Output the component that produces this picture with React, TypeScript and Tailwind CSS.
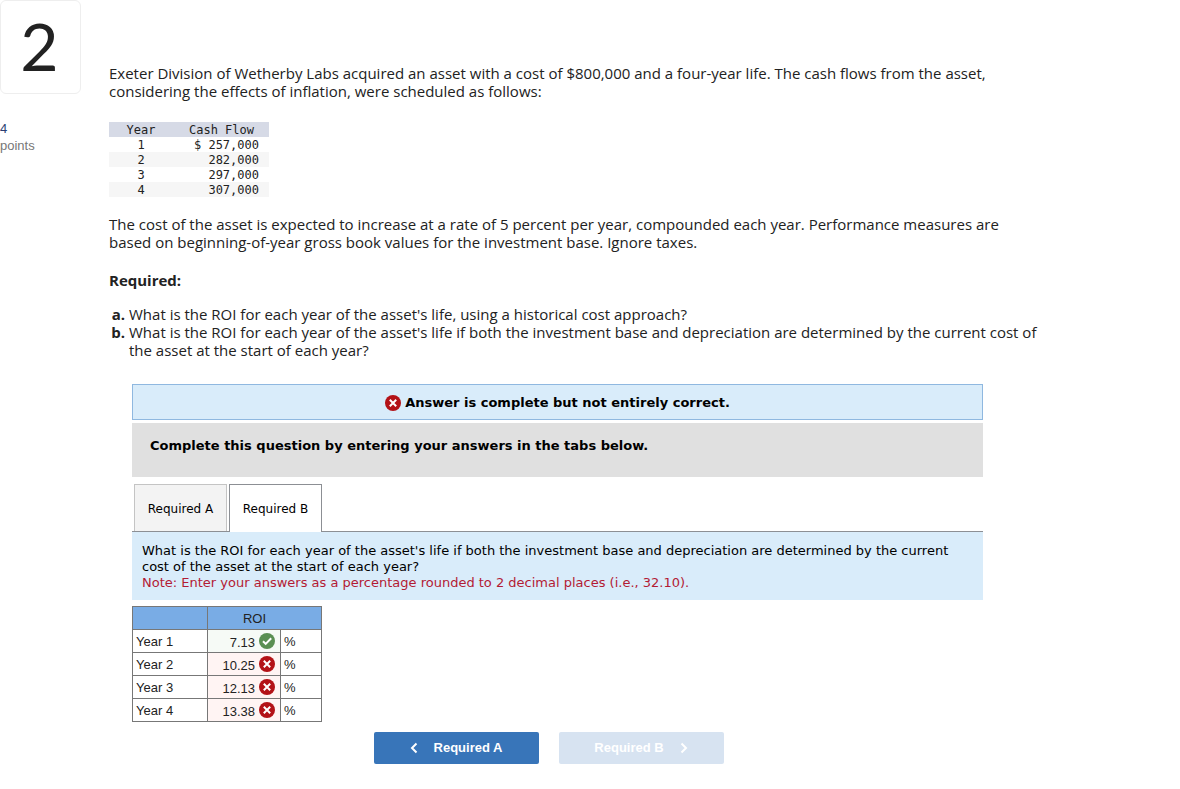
import { useState } from "react";

const CASH_FLOWS = [
  { year: 1, amount: "$ 257,000" },
  { year: 2, amount: "282,000" },
  { year: 3, amount: "297,000" },
  { year: 4, amount: "307,000" },
];

const ANSWERS = [
  { label: "Year 1", value: "7.13", correct: true },
  { label: "Year 2", value: "10.25", correct: false },
  { label: "Year 3", value: "12.13", correct: false },
  { label: "Year 4", value: "13.38", correct: false },
];

function WrongIcon() {
  return (
    <svg className="size-4 shrink-0" viewBox="0 0 16 16" role="img" aria-label="Incorrect">
      <circle cx="8" cy="8" r="8" fill="#b31217" />
      <path d="M4.8 4.8l6.4 6.4M11.2 4.8l-6.4 6.4" stroke="#fff" strokeWidth="2" />
    </svg>
  );
}

function RightIcon() {
  return (
    <svg className="size-4 shrink-0" viewBox="0 0 16 16" role="img" aria-label="Correct">
      <circle cx="8" cy="8" r="8" fill="#5a8f53" />
      <path d="M4 8.2l2.7 2.7L12.2 5.2" fill="none" stroke="#fff" strokeWidth="2" />
    </svg>
  );
}

function Chevron({ direction }: { direction: "left" | "right" }) {
  return (
    <svg className="h-3 w-2" viewBox="0 0 8 12" fill="none" stroke="currentColor" strokeWidth="2" aria-hidden="true">
      <path d={direction === "left" ? "M6.5 1.5L2 6l4.5 4.5" : "M1.5 1.5L6 6l-4.5 4.5"} />
    </svg>
  );
}

function CashFlowTable() {
  return (
    <table className="mt-[22px] w-40 font-['DejaVu_Sans_Mono',monospace] text-xs leading-[14px]">
      <thead>
        <tr className="bg-[#d6dae6]">
          <th className="w-16 px-0 pt-px pb-0 font-normal">Year</th>
          <th className="px-0 pt-px pb-0 font-normal">
            <span className="pl-px">Cash Flow</span>
          </th>
        </tr>
      </thead>
      <tbody>
        {CASH_FLOWS.map((row) => (
          <tr key={row.year} className="even:bg-[#f6f6f6]">
            <td className="px-0 pt-px pb-0 text-center">{row.year}</td>
            <td className="pt-px pr-[10px] pb-0 text-right">{row.amount}</td>
          </tr>
        ))}
      </tbody>
    </table>
  );
}

function AnswerTable() {
  return (
    <table className="mt-[6px] border-collapse font-['Liberation_Sans',Arial,sans-serif] text-[13px] leading-5 text-[#222]">
      <thead>
        <tr className="bg-[#79ace5]">
          <th className="w-[75px] border border-[#777] p-0" aria-label="Year" />
          <th colSpan={2} className="border border-[#777] pt-[2px] pr-5 pb-0 pl-0 font-normal">
            ROI
          </th>
        </tr>
      </thead>
      <tbody>
        {ANSWERS.map((row) => (
          <tr key={row.label}>
            <th className="border border-[#777] pt-[2px] pr-0 pb-0 pl-[3px] text-left font-normal">{row.label}</th>
            <td className={`w-[73px] border border-[#777] p-0 ${row.correct ? "bg-[#f6faf6]" : "bg-[#fff4f3]"}`}>
              <div className="flex items-center justify-end gap-1 pr-[5px]">
                <input
                  className="h-[22px] w-11 bg-transparent pt-[2px] text-right"
                  defaultValue={row.value}
                  aria-label={`${row.label} ROI`}
                />
                {row.correct ? <RightIcon /> : <WrongIcon />}
              </div>
            </td>
            <td className="w-[41px] border border-[#777] pt-[2px] pr-0 pb-0 pl-[3px]">%</td>
          </tr>
        ))}
      </tbody>
    </table>
  );
}

export default function App() {
  const [tab, setTab] = useState("B");

  return (
    <div className="flex min-h-screen items-start gap-7 bg-white font-['Open_Sans',sans-serif] text-[#222]">
      <aside className="w-[81px] shrink-0">
        <div className="flex h-[94px] items-center justify-center rounded-md border border-[#eee] pr-[2px] pb-[3px] font-['Lato',sans-serif] text-[66px]">
          2
        </div>
        <div className="mt-[26px] font-['Liberation_Sans',Arial,sans-serif] text-[13px] leading-[17px]">
          <p className="text-[#2b3f73]">4</p>
          <p className="text-[#777]">points</p>
        </div>
      </aside>

      <main className="max-w-[944px] flex-1 pt-16 pb-6 text-[15px] leading-[18px]">
        <p className="max-w-[920px]">
          Exeter Division of Wetherby Labs acquired an asset with a cost of $800,000 and a four-year life. The cash
          flows from the asset, considering the effects of inflation, were scheduled as follows:
        </p>

        <CashFlowTable />

        <p className="mt-[18px] max-w-[920px]">
          The cost of the asset is expected to increase at a rate of 5 percent per year, compounded each year.
          Performance measures are based on beginning-of-year gross book values for the investment base. Ignore taxes.
        </p>

        <h2 className="mt-5 font-bold">Required:</h2>

        <ol className="mt-4">
          <li className="flex gap-1">
            <b className="w-4 shrink-0 text-right">a.</b>
            <span>What is the ROI for each year of the asset's life, using a historical cost approach?</span>
          </li>
          <li className="flex gap-1">
            <b className="w-4 shrink-0 text-right">b.</b>
            <span>
              What is the ROI for each year of the asset's life if both the investment base and depreciation are
              determined by the current cost of the asset at the start of each year?
            </span>
          </li>
        </ol>

        <section className="mt-[25px] ml-[23px] max-w-[851px] font-['DejaVu_Sans',Verdana,sans-serif] text-[13px] leading-4 text-black">
          <div className="flex h-9 items-center justify-center gap-1 border border-[#8fb8e0] bg-[#d9ecfa] pt-[2px] font-bold">
            <WrongIcon />
            Answer is complete but not entirely correct.
          </div>
          <div className="mt-[3px] bg-[#e0e0e0] px-[18px] pt-[15px] pb-[23px] font-bold">
            Complete this question by entering your answers in the tabs below.
          </div>

          <div role="tablist" className="mt-[7px] flex gap-[2px] border-b border-[#8c8f94] pl-[2px] text-xs">
            {["A", "B"].map((name) => (
              <button
                key={name}
                type="button"
                role="tab"
                aria-selected={tab === name}
                onClick={() => setTab(name)}
                className={
                  tab === name
                    ? "-mb-px h-12 w-[93px] border border-b-0 border-[#8c8f94] bg-white pt-px"
                    : "h-[47px] w-[93px] border border-b-0 border-[#c4c4c4] bg-[#f3f3f3] pt-[2px]"
                }
              >
                Required {name}
              </button>
            ))}
          </div>

          <div className="bg-[#d9ecfa] px-[10px] pt-[11px] pb-[9px]">
            <p>
              What is the ROI for each year of the asset's life if both the investment base and depreciation are
              determined by the current cost of the asset at the start of each year?
            </p>
            <p className="text-[#b31b34]">
              Note: Enter your answers as a percentage rounded to 2 decimal places (i.e., 32.10).
            </p>
          </div>

          <AnswerTable />

          <div className="mt-[10px] flex justify-center gap-5 pr-[18px] font-['Liberation_Sans',Arial,sans-serif] text-[13px] font-bold text-white">
            <button
              type="button"
              onClick={() => setTab("A")}
              className="flex h-8 w-[165px] items-center justify-center gap-4 rounded-xs bg-[#3875b9]"
            >
              <Chevron direction="left" />
              Required A
            </button>
            <button
              type="button"
              disabled
              className="flex h-8 w-[165px] items-center justify-center gap-4 rounded-xs bg-[#d7e3f1]"
            >
              Required B
              <Chevron direction="right" />
            </button>
          </div>
        </section>
      </main>
    </div>
  );
}
